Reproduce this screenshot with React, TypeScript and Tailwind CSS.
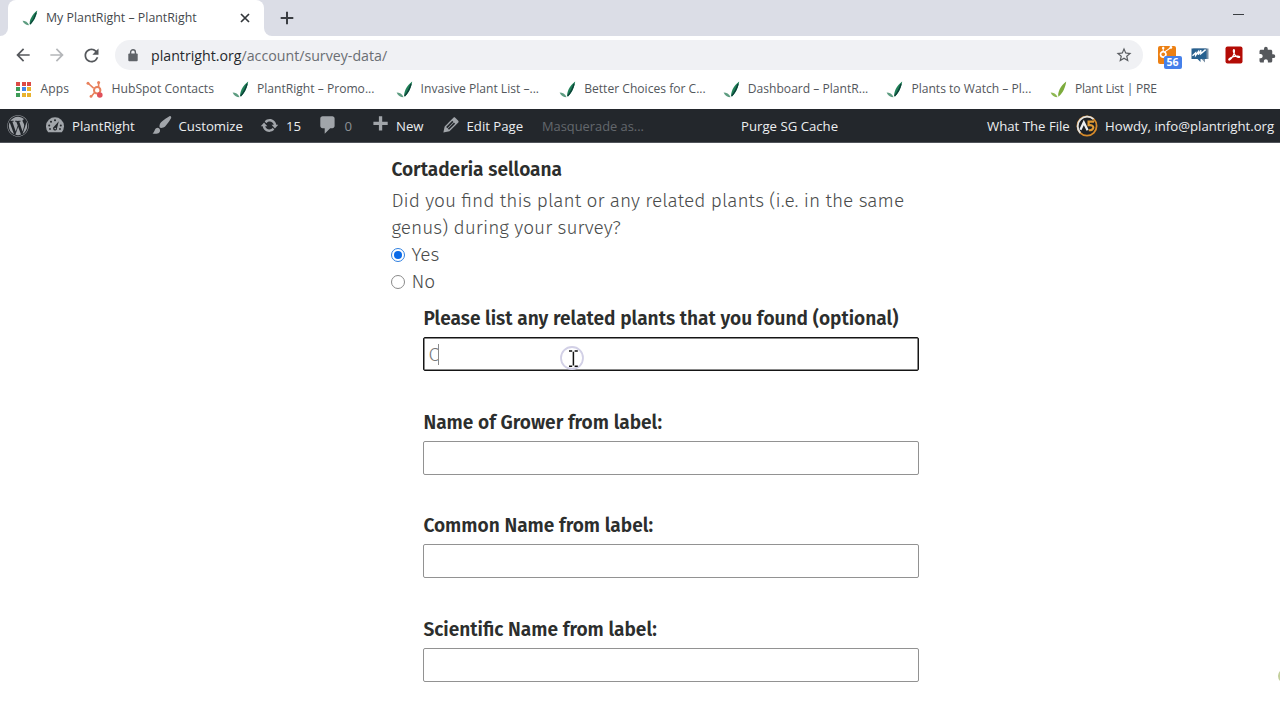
import type { ReactNode } from "react";
import { FaHubspot, FaWordpress } from "react-icons/fa";
import { MdArrowBack, MdArrowForward, MdExtension, MdRefresh, MdStarBorder } from "react-icons/md";

function Leaf({ lime = false, className = "h-[17px] w-[17px]" }: { lime?: boolean; className?: string }) {
  return (
    <svg viewBox="0 0 17 17" className={`shrink-0 ${className}`}>
      <path d="M16.2 0.6C15.6 5.6 13 12.2 8.4 15.8C7.2 11.6 10.6 4.8 16.2 0.6Z" fill={lime ? "#7cab3c" : "#1f8057"} />
      {!lime && <path d="M15 3C13.8 7.4 11.8 11.6 8.6 15" stroke="#0c4038" strokeWidth="1.3" fill="none" />}
      <path d="M0.6 11.4C3.4 11.4 6.2 12.8 7.6 16.2C4.4 16.2 1.8 14.4 0.6 11.4Z" fill={lime ? "#8db851" : "#5d9c80"} />
    </svg>
  );
}

function AppsGrid() {
  const colors = ["#dc4a45", "#dc4a45", "#dc4a45", "#3d9c57", "#4285e8", "#e8b22e", "#3d9c57", "#e8b22e", "#e8b22e"];
  return (
    <div className="grid h-[15px] w-[15px] grid-cols-3 gap-[1.5px]">
      {colors.map((c, i) => (
        <svg key={i} viewBox="0 0 4 4" className="h-1 w-1">
          <rect width="4" height="4" fill={c} />
        </svg>
      ))}
    </div>
  );
}

function Bookmark({ label, lime, tight }: { label: string; lime?: boolean; tight?: boolean }) {
  return (
    <div className="flex w-[163.6px] shrink-0 items-center gap-[8px] whitespace-nowrap">
      <Leaf lime={lime} />
      <span className={tight ? "tracking-[-0.25px]" : ""}>{label}</span>
    </div>
  );
}

function Dash({ d, className = "h-[22px] w-[22px]" }: { d: string; className?: string }) {
  return (
    <svg viewBox="0 0 20 20" className={`shrink-0 fill-[#a1a5aa] ${className}`}>
      <path fillRule="evenodd" d={d} />
    </svg>
  );
}

const BRUSH =
  "M18.33 3.57s.27-.8-.31-1.36c-.53-.52-1.22-.24-1.22-.24-.61.3-5.76 3.47-7.67 5.57-.86.96-2.06 3.79-1.09 4.82.92.98 3.96-.17 4.79-1 2.06-2.06 5.21-7.17 5.5-7.79zM1.4 17.65c2.37-1.56 1.46-3.41 3.23-4.64.93-.65 2.22-.62 3.08.29.63.67.8 2.57-.16 3.46-1.57 1.45-4 1.55-6.15.89z";
const UPDATE =
  "M10.2 3.28c3.53 0 6.43 2.61 6.92 6h2.08l-3.5 4-3.5-4h2.32c-.45-1.97-2.21-3.45-4.32-3.45-1.45 0-2.73.71-3.54 1.78L4.95 5.66C6.23 4.2 8.11 3.28 10.2 3.28zm-.4 13.44c-3.52 0-6.43-2.61-6.92-6H.8l3.5-4c1.17 1.33 2.33 2.67 3.5 4H5.48c.45 1.97 2.21 3.45 4.32 3.45 1.45 0 2.73-.71 3.54-1.78l1.71 1.95c-1.28 1.46-3.15 2.38-5.25 2.38z";
const COMMENT = "M5 2h9c1.1 0 2 .9 2 2v7c0 1.1-.9 2-2 2h-2l-5 5v-5H5c-1.1 0-2-.9-2-2V4c0-1.1.9-2 2-2z";
const PLUS = "M17 7v3h-5v5H9v-5H4V7h5V2h3v5h5z";
const PENCIL =
  "M13.89 3.39l2.71 2.72c.46.46.42 1.24.03 1.64l-8.01 8.02-5.56 1.16 1.16-5.58s7.6-7.63 7.99-8.03c.39-.39 1.22-.39 1.68.07zm-2.73 2.79l-5.59 5.61 1.11 1.11 5.54-5.65zm-2.97 8.23l5.58-5.6-1.07-1.08-5.59 5.6z";

function Gauge() {
  return (
    <svg viewBox="0 0 18 16" className="h-4 w-[18px] shrink-0">
      <path d="M2.2 15.2A9 9 0 1 1 15.8 15.2Z" fill="#a1a5aa" />
      <g fill="#23272c">
        <circle cx="9" cy="3.2" r="1" />
        <circle cx="5" cy="4.8" r="1" />
        <circle cx="3.2" cy="8.6" r="1" />
        <circle cx="14.8" cy="8.6" r="1" />
        <circle cx="4" cy="12" r="0.9" />
        <circle cx="14" cy="12" r="0.9" />
        <path d="M12.8 4.2L11 11.2A2 2 0 1 1 7.9 9.8Z" />
      </g>
      <circle cx="9.2" cy="11.6" r="0.8" fill="#a1a5aa" />
    </svg>
  );
}

function Avatar() {
  return (
    <svg viewBox="0 0 22 22" className="h-[22px] w-[22px] shrink-0">
      <circle cx="11" cy="11" r="9.6" fill="#1c2025" stroke="#d68a2a" strokeWidth="1.8" />
      <path d="M4.2 17.8A9.6 9.6 0 0 1 17.5 4" stroke="#dfe2e5" strokeWidth="1.8" fill="none" />
      <path d="M4.4 14.8L7.8 7.4L11.6 15.2" stroke="#eceef0" strokeWidth="2.3" fill="none" />
      <path d="M18 6.6H12.6V10.2C19 9.2 18.8 15.8 12.8 15.2" stroke="#e09a34" strokeWidth="2.2" fill="none" />
    </svg>
  );
}

function TabStrip() {
  return (
    <div className="flex h-9 items-start bg-[#dbdde6]">
      <div className="h-9 w-2 bg-white">
        <div className="h-9 w-2 rounded-br-lg bg-[#dbdde6]" />
      </div>
      <div className="flex h-9 w-64 items-center rounded-t-lg bg-white pl-[14px]">
        <Leaf className="h-4 w-4" />
        <span className="ml-[8px] w-[194px] whitespace-nowrap text-[12.35px] text-[#45494d]">My PlantRight – PlantRight</span>
        <svg viewBox="0 0 10 10" className="h-[10px] w-[10px]" stroke="#33373b" strokeWidth="1.7">
          <path d="M1 1L9 9M9 1L1 9" />
        </svg>
      </div>
      <div className="h-9 w-2 bg-white">
        <div className="h-9 w-2 rounded-bl-lg bg-[#dbdde6]" />
      </div>
      <svg viewBox="0 0 14 14" className="mt-[11px] ml-[8px] h-[14px] w-[14px]" stroke="#3a3d42" strokeWidth="2">
        <path d="M7 0.7V13.3M0.7 7H13.3" />
      </svg>
      <div className="mt-[14px] mr-[36px] ml-auto h-px w-[11px] bg-[#3a3d42]" />
    </div>
  );
}

function Toolbar() {
  return (
    <div className="flex h-[38px] items-center bg-white pl-[13px]">
      <MdArrowBack className="h-5 w-5 text-[#55585c]" />
      <MdArrowForward className="ml-[14px] h-5 w-5 text-[#b4b6b9]" />
      <MdRefresh className="ml-[14px] h-[21px] w-[21px] text-[#55585c]" />
      <div className="ml-[13px] flex h-[30px] w-[1028px] items-center rounded-full bg-[#f0f1f4] pr-[10px] pl-[13px]">
        <svg viewBox="0 0 10 13" className="h-[13px] w-[10px]">
          <rect x="0.3" y="4.6" width="9.4" height="7.6" rx="1" fill="#5f6368" />
          <path d="M2.6 5V3.2A2.4 2.4 0 0 1 7.4 3.2V5" fill="none" stroke="#5f6368" strokeWidth="1.4" />
        </svg>
        <span className="ml-[13px] pt-[2px] text-[14.2px] text-[#6a6e73]">
          <span className="text-[#26292d]">plantright.org</span>/account/survey-data/
        </span>
        <MdStarBorder className="ml-auto h-[18px] w-[18px] text-[#5a5d61]" />
      </div>
      <div className="relative ml-[14.5px] flex h-[18px] w-[18px] items-center justify-center rounded-[2px] bg-[#ec8013]">
        <FaHubspot className="mr-px mb-1 h-[14px] w-[14px] -scale-x-100 text-white" />
        <span className="absolute top-[10px] left-[6px] flex h-[13px] w-[18px] items-center justify-center rounded-[2px] bg-[#4580ea] text-[10.5px] font-bold text-white">56</span>
      </div>
      <svg viewBox="0 0 18 18" className="ml-[15.5px] h-[18px] w-[18px]">
        <path d="M2 2.5H17.5V13H14V16.5L10.5 13H9Z" fill="#7b90a4" />
        <path d="M0.5 2.5H15.5V13H9.5V16L6.5 13H0.5Z" fill="#28618f" />
        <path d="M1.5 9.8L4.6 6.8V9.4L7.4 5.6V8.8L9.8 4.2V7.8L14.6 3.6" stroke="#fff" strokeWidth="1.4" fill="none" />
      </svg>
      <svg viewBox="0 0 18 18" className="ml-[15.5px] h-[18px] w-[18px]">
        <rect x="0.5" y="0.5" width="17" height="17" rx="2" fill="#b30b05" />
        <path
          d="M8.9 3.7C7.8 3.8 8.4 7.4 10.4 9.6C12 11.3 14.6 12 14.7 10.9C14.8 9.7 10.5 10 7.4 11C4.6 12 3.2 13.6 4 14C5.2 14.6 8 10.6 8.9 8C9.6 5.8 9.7 3.7 8.9 3.7Z"
          fill="none"
          stroke="#fff"
          strokeWidth="1.2"
        />
      </svg>
      <MdExtension className="ml-[15.5px] h-[18px] w-[18px] shrink-0 text-[#55585c]" />
    </div>
  );
}

function BookmarksBar() {
  return (
    <div className="flex h-[35px] items-center overflow-hidden bg-white pb-[4px] text-[12.1px] text-[#53575c]">
      <div className="flex w-[86px] shrink-0 items-center gap-[9.5px] pl-4">
        <AppsGrid />
        <span className="tracking-[0.1px]">Apps</span>
      </div>
      <div className="flex w-[146px] shrink-0 items-center gap-[8.5px] whitespace-nowrap">
        <svg viewBox="0 0 17 17" className="h-[17px] w-[17px]" fill="none" stroke="#e8805c">
          <path d="M1.8 2L7.6 7.2M12.6 1.6V6.4M9 11L5.2 15.4" strokeWidth="1.6" />
          <circle cx="11.2" cy="9.2" r="3.2" strokeWidth="2" />
          <circle cx="2" cy="2.2" r="1.5" fill="#e8805c" stroke="none" />
          <circle cx="12.6" cy="1.6" r="1.5" fill="#e8805c" stroke="none" />
          <circle cx="5" cy="15.4" r="1.4" fill="#e8805c" stroke="none" />
          <circle cx="13.8" cy="14" r="2.8" fill="#e0505a" stroke="none" />
        </svg>
        <span className="text-[12.2px]">HubSpot Contacts</span>
      </div>
      <Bookmark label="PlantRight – Promo..." />
      <Bookmark label="Invasive Plant List –..." />
      <Bookmark label="Better Choices for C..." />
      <Bookmark label="Dashboard – PlantR..." />
      <Bookmark label="Plants to Watch – Pl..." />
      <Bookmark label="Plant List | PRE" lime tight />
    </div>
  );
}

function AdminItem({ icon, children, className }: { icon: ReactNode; children: ReactNode; className: string }) {
  return (
    <div className={`flex shrink-0 items-center whitespace-nowrap ${className}`}>
      {icon}
      <span className="pt-[3px]">{children}</span>
    </div>
  );
}

function AdminBar() {
  return (
    <div className="flex h-[34px] items-center overflow-hidden border-b border-[#50545a] bg-[#23272c] pl-[7px] text-[13.2px] text-[#eceef0]">
      <FaWordpress className="h-[22px] w-[22px] shrink-0 text-[#a1a5aa]" />
      <AdminItem icon={<Gauge />} className="ml-[17px] w-[105px] gap-[8px]">PlantRight</AdminItem>
      <AdminItem icon={<Dash d={BRUSH} />} className="w-[108.5px] gap-[5.5px]">Customize</AdminItem>
      <AdminItem icon={<Dash d={UPDATE} className="h-[19px] w-[19px]" />} className="w-[57px] gap-[7.5px]">15</AdminItem>
      <AdminItem icon={<Dash d={COMMENT} />} className="w-[52px] gap-[6px] text-[#8b8f94]">0</AdminItem>
      <AdminItem icon={<Dash d={PLUS} />} className="w-[71px] gap-[5.5px]">New</AdminItem>
      <AdminItem icon={<Dash d={PENCIL} />} className="w-[102.5px] gap-[5px]">Edit Page</AdminItem>
      <span className="w-[199px] shrink-0 pt-[3px] text-[12.85px] text-[#63676c]">Masquerade as...</span>
      <span className="w-[246px] shrink-0 pt-[3px]">Purge SG Cache</span>
      <span className="w-[89px] shrink-0 pt-[3px]">What The File</span>
      <Avatar />
      <span className="ml-[7px] shrink-0 pt-[3px]">Howdy, info@plantright.org</span>
    </div>
  );
}

function Radio({ label, checked = false }: { label: string; checked?: boolean }) {
  return (
    <div className="flex h-[27px] items-center">
      <div
        className={`flex h-[14px] w-[14px] items-center justify-center rounded-full border ${checked ? "border-[#2f7fe0]" : "border-[#8a8a8a]"}`}
      >
        {checked && <div className="h-2 w-2 rounded-full bg-[#0b6be8]" />}
      </div>
      <span className="ml-[6px]">{label}</span>
    </div>
  );
}

function Field({ label, children, focused = false }: { label: string; children?: ReactNode; focused?: boolean }) {
  return (
    <div className="h-[103.7px]">
      <div className="h-[27px] font-semibold whitespace-nowrap text-[#2c2e2d]">{label}</div>
      <div
        className={`relative mt-[5px] flex h-[34px] w-[496px] items-center rounded-[2px] bg-white pl-1 ${focused ? "border border-[#151515] ring-[0.5px] ring-[#151515] ring-inset" : "border border-[#929292]"}`}
      >
        {children}
      </div>
    </div>
  );
}

export default function App() {
  return (
    <div className="h-[720px] w-[1280px] overflow-hidden bg-white font-['Open_Sans','Noto_Sans',sans-serif]">
      <TabStrip />
      <Toolbar />
      <BookmarksBar />
      <AdminBar />
      <main className="relative h-[577px] overflow-hidden pt-[13px] pl-[391.4px] font-['Fira_Sans','Open_Sans',sans-serif] text-[19.12px] leading-[27px] font-light text-[#4a4c4b]">
        <h2 className="h-[27px] font-semibold text-[#2c2e2d]">Cortaderia selloana</h2>
        <p className="mt-[4px] whitespace-nowrap">
          Did you find this plant or any related plants (i.e. in the same
          <br />
          genus) during your survey?
        </p>
        <Radio label="Yes" checked />
        <Radio label="No" />
        <div className="mt-[10px] pl-8">
          <Field label="Please list any related plants that you found (optional)" focused>
            <span className="w-[10px] text-[#777]">C</span>
            <span className="h-[21px] w-px bg-[#8a8a8a]" />
            <svg viewBox="0 0 24 24" className="absolute top-[8px] left-[136px] h-6 w-6" fill="none">
              <circle cx="12" cy="12" r="11" stroke="#d2d0e6" strokeWidth="1.8" />
              <path d="M9 5H12.2M14.6 5H17.8M9 20.2H12.2M14.6 20.2H17.8M13.4 5.8V19.4" stroke="#111" strokeWidth="1.5" />
            </svg>
          </Field>
          <Field label="Name of Grower from label:" />
          <Field label="Common Name from label:" />
          <Field label="Scientific Name from label:" />
        </div>
        <div className="absolute top-[526px] left-[1278px] h-[14px] w-[14px] rounded-full bg-[#c3cf9b]" />
      </main>
    </div>
  );
}
